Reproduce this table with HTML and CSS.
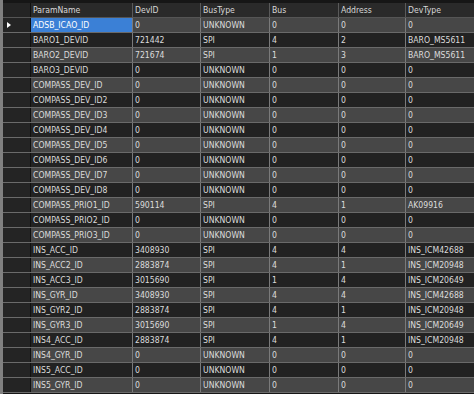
FILE: index.html
```html
<!DOCTYPE html>
<html>
<head>
<meta charset="utf-8">
<link rel="stylesheet" href="styles.css">
</head>
<body>
<div class="frame">
  <div class="edge"></div>
  <div class="grid">
    <div class="row head">
      <div class="rh"></div>
      <div class="c">ParamName</div>
      <div class="c">DevID</div>
      <div class="c">BusType</div>
      <div class="c">Bus</div>
      <div class="c">Address</div>
      <div class="c">DevType</div>
    </div>
    <div class="row alt"><div class="rh"><span class="arrow"></span></div><div class="c sel">ADSB_ICAO_ID</div><div class="c">0</div><div class="c">UNKNOWN</div><div class="c">0</div><div class="c">0</div><div class="c">0</div></div>
    <div class="row"><div class="rh"></div><div class="c">BARO1_DEVID</div><div class="c">721442</div><div class="c">SPI</div><div class="c">4</div><div class="c">2</div><div class="c">BARO_MS5611</div></div>
    <div class="row alt"><div class="rh"></div><div class="c">BARO2_DEVID</div><div class="c">721674</div><div class="c">SPI</div><div class="c">1</div><div class="c">3</div><div class="c">BARO_MS5611</div></div>
    <div class="row"><div class="rh"></div><div class="c">BARO3_DEVID</div><div class="c">0</div><div class="c">UNKNOWN</div><div class="c">0</div><div class="c">0</div><div class="c">0</div></div>
    <div class="row alt"><div class="rh"></div><div class="c">COMPASS_DEV_ID</div><div class="c">0</div><div class="c">UNKNOWN</div><div class="c">0</div><div class="c">0</div><div class="c">0</div></div>
    <div class="row"><div class="rh"></div><div class="c">COMPASS_DEV_ID2</div><div class="c">0</div><div class="c">UNKNOWN</div><div class="c">0</div><div class="c">0</div><div class="c">0</div></div>
    <div class="row alt"><div class="rh"></div><div class="c">COMPASS_DEV_ID3</div><div class="c">0</div><div class="c">UNKNOWN</div><div class="c">0</div><div class="c">0</div><div class="c">0</div></div>
    <div class="row"><div class="rh"></div><div class="c">COMPASS_DEV_ID4</div><div class="c">0</div><div class="c">UNKNOWN</div><div class="c">0</div><div class="c">0</div><div class="c">0</div></div>
    <div class="row alt"><div class="rh"></div><div class="c">COMPASS_DEV_ID5</div><div class="c">0</div><div class="c">UNKNOWN</div><div class="c">0</div><div class="c">0</div><div class="c">0</div></div>
    <div class="row"><div class="rh"></div><div class="c">COMPASS_DEV_ID6</div><div class="c">0</div><div class="c">UNKNOWN</div><div class="c">0</div><div class="c">0</div><div class="c">0</div></div>
    <div class="row alt"><div class="rh"></div><div class="c">COMPASS_DEV_ID7</div><div class="c">0</div><div class="c">UNKNOWN</div><div class="c">0</div><div class="c">0</div><div class="c">0</div></div>
    <div class="row"><div class="rh"></div><div class="c">COMPASS_DEV_ID8</div><div class="c">0</div><div class="c">UNKNOWN</div><div class="c">0</div><div class="c">0</div><div class="c">0</div></div>
    <div class="row alt"><div class="rh"></div><div class="c">COMPASS_PRIO1_ID</div><div class="c">590114</div><div class="c">SPI</div><div class="c">4</div><div class="c">1</div><div class="c">AK09916</div></div>
    <div class="row"><div class="rh"></div><div class="c">COMPASS_PRIO2_ID</div><div class="c">0</div><div class="c">UNKNOWN</div><div class="c">0</div><div class="c">0</div><div class="c">0</div></div>
    <div class="row alt"><div class="rh"></div><div class="c">COMPASS_PRIO3_ID</div><div class="c">0</div><div class="c">UNKNOWN</div><div class="c">0</div><div class="c">0</div><div class="c">0</div></div>
    <div class="row"><div class="rh"></div><div class="c">INS_ACC_ID</div><div class="c">3408930</div><div class="c">SPI</div><div class="c">4</div><div class="c">4</div><div class="c">INS_ICM42688</div></div>
    <div class="row alt"><div class="rh"></div><div class="c">INS_ACC2_ID</div><div class="c">2883874</div><div class="c">SPI</div><div class="c">4</div><div class="c">1</div><div class="c">INS_ICM20948</div></div>
    <div class="row"><div class="rh"></div><div class="c">INS_ACC3_ID</div><div class="c">3015690</div><div class="c">SPI</div><div class="c">1</div><div class="c">4</div><div class="c">INS_ICM20649</div></div>
    <div class="row alt"><div class="rh"></div><div class="c">INS_GYR_ID</div><div class="c">3408930</div><div class="c">SPI</div><div class="c">4</div><div class="c">4</div><div class="c">INS_ICM42688</div></div>
    <div class="row"><div class="rh"></div><div class="c">INS_GYR2_ID</div><div class="c">2883874</div><div class="c">SPI</div><div class="c">4</div><div class="c">1</div><div class="c">INS_ICM20948</div></div>
    <div class="row alt"><div class="rh"></div><div class="c">INS_GYR3_ID</div><div class="c">3015690</div><div class="c">SPI</div><div class="c">1</div><div class="c">4</div><div class="c">INS_ICM20649</div></div>
    <div class="row"><div class="rh"></div><div class="c">INS4_ACC_ID</div><div class="c">2883874</div><div class="c">SPI</div><div class="c">4</div><div class="c">1</div><div class="c">INS_ICM20948</div></div>
    <div class="row alt"><div class="rh"></div><div class="c">INS4_GYR_ID</div><div class="c">0</div><div class="c">UNKNOWN</div><div class="c">0</div><div class="c">0</div><div class="c">0</div></div>
    <div class="row"><div class="rh"></div><div class="c">INS5_ACC_ID</div><div class="c">0</div><div class="c">UNKNOWN</div><div class="c">0</div><div class="c">0</div><div class="c">0</div></div>
    <div class="row alt"><div class="rh"></div><div class="c">INS5_GYR_ID</div><div class="c">0</div><div class="c">UNKNOWN</div><div class="c">0</div><div class="c">0</div><div class="c">0</div></div>
  </div>
</div>
</body>
</html>
```

FILE: styles.css
```css
html, body {
  margin: 0;
  padding: 0;
  background: #161616;
  overflow: hidden;
}
body {
  font-family: "DejaVu Sans Condensed", "DejaVu Sans", sans-serif;
  font-stretch: condensed;
  font-size: 8.6px;
  color: #dcdcdc;
}
.frame {
  display: flex;
  height: 394px;
  padding-top: 3px;
  box-sizing: border-box;
}
.edge {
  width: 3px;
  flex: none;
  background: #808080;
  margin-top: -3px;
}
.grid {
  flex: 1;
  display: flex;
  flex-direction: column;
}
.row {
  display: grid;
  grid-template-columns: 27px 102px 68px 69px 69px 67px 1fr;
  height: 15px;
  flex: none;
  box-sizing: border-box;
  border-bottom: 1px solid #6a6a6a;
  background: #222222;
}
.row.alt {
  background: #474747;
}
.row.head {
  background: #2a2a2a;
  border-bottom: 1px solid #555555;
}
.c {
  border-left: 1px solid #7a7a7a;
  padding-left: 2px;
  line-height: 14px;
  white-space: nowrap;
  overflow: hidden;
}
.head .c {
  border-left: 1px solid #5a5a5a;
  color: #d8d8d8;
}
.rh {
  background: #242424;
  position: relative;
}
.row .rh + .c {
  border-left: 1px solid #111111;
}
.c.sel {
  background: #3b80d6;
  color: #ffffff;
}
.arrow {
  position: absolute;
  left: 4px;
  top: 4px;
  width: 0;
  height: 0;
  border-top: 3px solid transparent;
  border-bottom: 3px solid transparent;
  border-left: 4px solid #ffffff;
}
```
